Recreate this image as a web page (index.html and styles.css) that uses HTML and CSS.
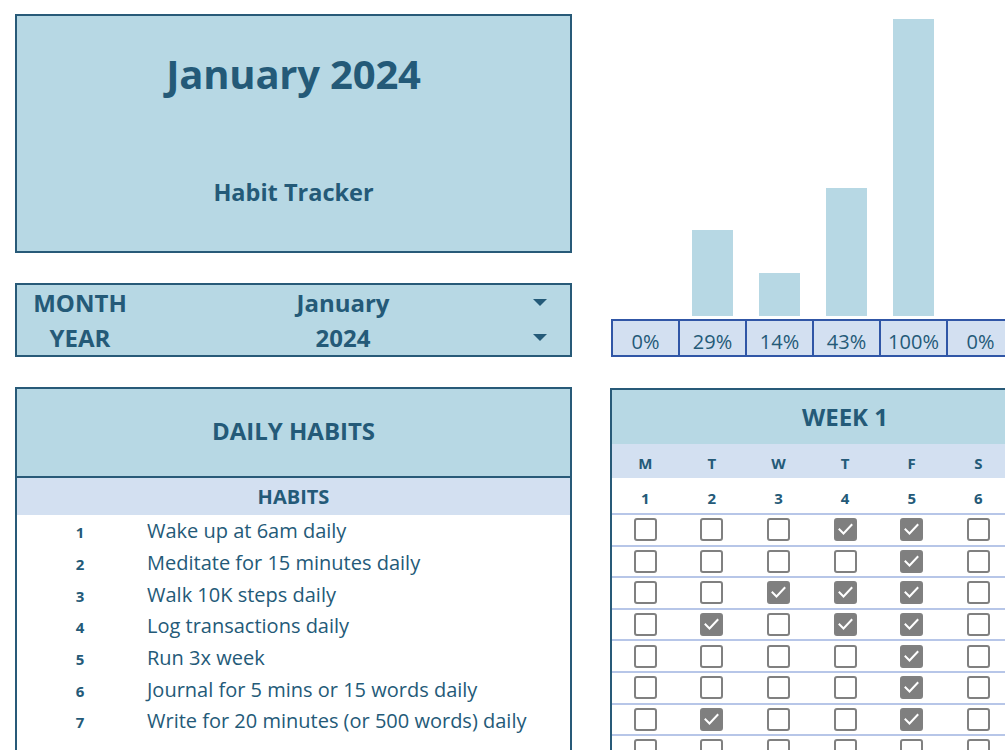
FILE: index.html
```html
<!DOCTYPE html>
<html lang="en">
<head>
<meta charset="utf-8">
<title>January 2024 Habit Tracker</title>
<link rel="stylesheet" href="styles.css">
</head>
<body>
<div class="page">
  <div class="left">
    <section class="title-box">
      <h1 class="title">January 2024</h1>
      <h2 class="subtitle">Habit Tracker</h2>
    </section>

    <section class="select-box">
      <div class="sel-label">MONTH</div>
      <div class="sel-value">January</div>
      <div class="sel-arrow"><span class="tri"></span></div>
      <div class="sel-label">YEAR</div>
      <div class="sel-value">2024</div>
      <div class="sel-arrow"><span class="tri"></span></div>
    </section>

    <section class="habits-box">
      <div class="habits-head">DAILY HABITS</div>
      <div class="habits-sub">HABITS</div>
      <ol class="habit-list">
        <li class="habit"><span class="num">1</span><span class="name">Wake up at 6am daily</span></li>
        <li class="habit"><span class="num">2</span><span class="name">Meditate for 15 minutes daily</span></li>
        <li class="habit"><span class="num">3</span><span class="name">Walk 10K steps daily</span></li>
        <li class="habit"><span class="num">4</span><span class="name">Log transactions daily</span></li>
        <li class="habit"><span class="num">5</span><span class="name">Run 3x week</span></li>
        <li class="habit"><span class="num">6</span><span class="name">Journal for 5 mins or 15 words daily</span></li>
        <li class="habit"><span class="num">7</span><span class="name">Write for 20 minutes (or 500 words) daily</span></li>
        <li class="habit"><span class="num">8</span><span class="name"></span></li>
      </ol>
    </section>
  </div>

  <div class="right">
    <div class="chart">
      <div class="bar-col"><div class="bar" style="height:0px"></div></div>
      <div class="bar-col"><div class="bar" style="height:86px"></div></div>
      <div class="bar-col"><div class="bar" style="height:43px"></div></div>
      <div class="bar-col"><div class="bar" style="height:128px"></div></div>
      <div class="bar-col"><div class="bar" style="height:297px"></div></div>
      <div class="bar-col"><div class="bar" style="height:0px"></div></div>
      <div class="bar-col"><div class="bar" style="height:0px"></div></div>
    </div>
    <div class="pct-row">
      <div class="pct">0%</div>
      <div class="pct">29%</div>
      <div class="pct">14%</div>
      <div class="pct">43%</div>
      <div class="pct">100%</div>
      <div class="pct">0%</div>
      <div class="pct">0%</div>
    </div>

    <section class="week">
      <div class="week-head">WEEK 1</div>
      <div class="week-row days">
        <span>M</span><span>T</span><span>W</span><span>T</span><span>F</span><span>S</span><span>S</span>
      </div>
      <div class="week-row dates">
        <span>1</span><span>2</span><span>3</span><span>4</span><span>5</span><span>6</span><span>7</span>
      </div>
      <div id="checks"></div>
    </section>
  </div>
</div>
<script>
  var data = [
    [0,0,0,1,1,0,0],
    [0,0,0,0,1,0,0],
    [0,0,1,1,1,0,0],
    [0,1,0,1,1,0,0],
    [0,0,0,0,1,0,0],
    [0,0,0,0,1,0,0],
    [0,1,0,0,1,0,0],
    [0,0,0,0,0,0,0]
  ];
  var host = document.getElementById('checks');
  var tick = '<svg viewBox="0 0 19 19" width="19" height="19"><polyline points="3.5,9.5 7.5,13.5 15.5,5" fill="none" stroke="#ffffff" stroke-width="2" stroke-linecap="square" stroke-linejoin="miter"/></svg>';
  data.forEach(function (row) {
    var r = document.createElement('div');
    r.className = 'check-row';
    row.forEach(function (v) {
      var cell = document.createElement('span');
      cell.className = 'check-cell';
      var box = document.createElement('span');
      box.className = v ? 'cb cb-on' : 'cb';
      if (v) box.innerHTML = tick;
      cell.appendChild(box);
      r.appendChild(cell);
    });
    host.appendChild(r);
  });
</script>
</body>
</html>
```

FILE: styles.css
```css
* { box-sizing: border-box; }

html, body {
  margin: 0;
  padding: 0;
  width: 1005px;
  height: 750px;
  overflow: hidden;
  background: #ffffff;
}

body {
  font-family: "Open Sans", "Noto Sans", "DejaVu Sans", sans-serif;
  color: #245a78;
}

.page {
  display: flex;
  gap: 38px;
  padding-left: 15px;
  width: 1100px;
}

.left {
  width: 557px;
  flex: none;
  padding-top: 14px;
}

.right {
  flex: none;
  width: 470px;
}

/* Title box */
.title-box {
  height: 239px;
  border: 2px solid #285a78;
  background: #b7d8e4;
  display: flex;
  flex-direction: column;
  align-items: center;
  padding-top: 31px;
}

.title {
  margin: 0;
  font-size: 40px;
  line-height: 54px;
  font-weight: 700;
  letter-spacing: -0.2px;
}

.subtitle {
  margin: 76px 0 0;
  font-size: 23.5px;
  line-height: 30px;
  font-weight: 700;
}

/* Month / year selector */
.select-box {
  margin-top: 30px;
  height: 74px;
  border: 2px solid #285a78;
  background: #b7d8e4;
  display: grid;
  grid-template-columns: 126px 388px 1fr;
  grid-template-rows: 35px 35px;
  align-items: center;
  font-weight: 700;
  font-size: 24px;
  line-height: 30px;
}

.sel-label { text-align: center; }

.sel-value {
  text-align: center;
  padding-left: 12px;
}

.sel-arrow {
  display: flex;
  align-items: center;
  padding-left: 2px;
}

.tri {
  width: 0;
  height: 0;
  border-left: 7px solid transparent;
  border-right: 7px solid transparent;
  border-top: 7px solid #245a78;
}

/* Daily habits */
.habits-box {
  margin-top: 30px;
  border: 2px solid #285a78;
  border-bottom: none;
  height: 400px;
}

.habits-head {
  height: 89px;
  background: #b7d8e4;
  border-bottom: 2px solid #285a78;
  display: flex;
  align-items: center;
  justify-content: center;
  font-size: 24px;
  font-weight: 700;
  padding-bottom: 4px;
}

.habits-sub {
  height: 37px;
  background: #d3e0f1;
  display: flex;
  align-items: center;
  justify-content: center;
  font-size: 20px;
  font-weight: 700;
}

.habit-list {
  list-style: none;
  margin: 0;
  padding: 0;
}

.habit {
  height: 31.65px;
  display: grid;
  grid-template-columns: 126px 1fr;
  align-items: center;
}

.num {
  text-align: center;
  font-size: 15px;
  font-weight: 700;
  padding-top: 3px;
}

.name {
  padding-left: 4px;
  font-size: 20px;
  white-space: nowrap;
}

/* Chart */
.chart {
  height: 316px;
  display: flex;
  align-items: flex-end;
  margin-left: 1px;
  margin-bottom: 3px;
}

.bar-col {
  width: 67px;
  flex: none;
  display: flex;
  justify-content: center;
  padding-left: 2px;
}

.bar {
  width: 41px;
  background: #b7d8e4;
}

.pct-row {
  display: flex;
  margin-left: 1px;
  height: 38px;
}

.pct {
  width: 67px;
  flex: none;
  border: 2px solid #3056a6;
  border-right: none;
  background: #d3e0f1;
  display: flex;
  align-items: center;
  justify-content: center;
  padding-top: 6px;
  font-size: 20px;
}

/* Week */
.week {
  margin-top: 31px;
  width: 468px;
  border-top: 2px solid #285a78;
  border-left: 2px solid #285a78;
}

.week-head {
  height: 54px;
  background: #b7d8e4;
  display: flex;
  align-items: center;
  justify-content: center;
  font-size: 24px;
  font-weight: 700;
  padding-bottom: 2px;
}

.week-row {
  display: flex;
  font-size: 15px;
  font-weight: 700;
}

.week-row span {
  width: 66.6px;
  flex: none;
  text-align: center;
}

.days {
  height: 34px;
  background: #d3e0f1;
  padding-top: 9px;
}

.dates {
  height: 35px;
  padding-top: 10px;
}

.check-row {
  display: flex;
  height: 31.6px;
  border-top: 2px solid #b7c6e8;
}

.check-cell {
  width: 66.6px;
  flex: none;
  display: flex;
  align-items: center;
  justify-content: center;
}

.cb {
  width: 23px;
  height: 23px;
  border: 2px solid #808080;
  border-radius: 3px;
  background: #ffffff;
  display: flex;
  align-items: center;
  justify-content: center;
}

.cb-on {
  background: #7f7f7f;
}

.cb svg { display: block; }
```
